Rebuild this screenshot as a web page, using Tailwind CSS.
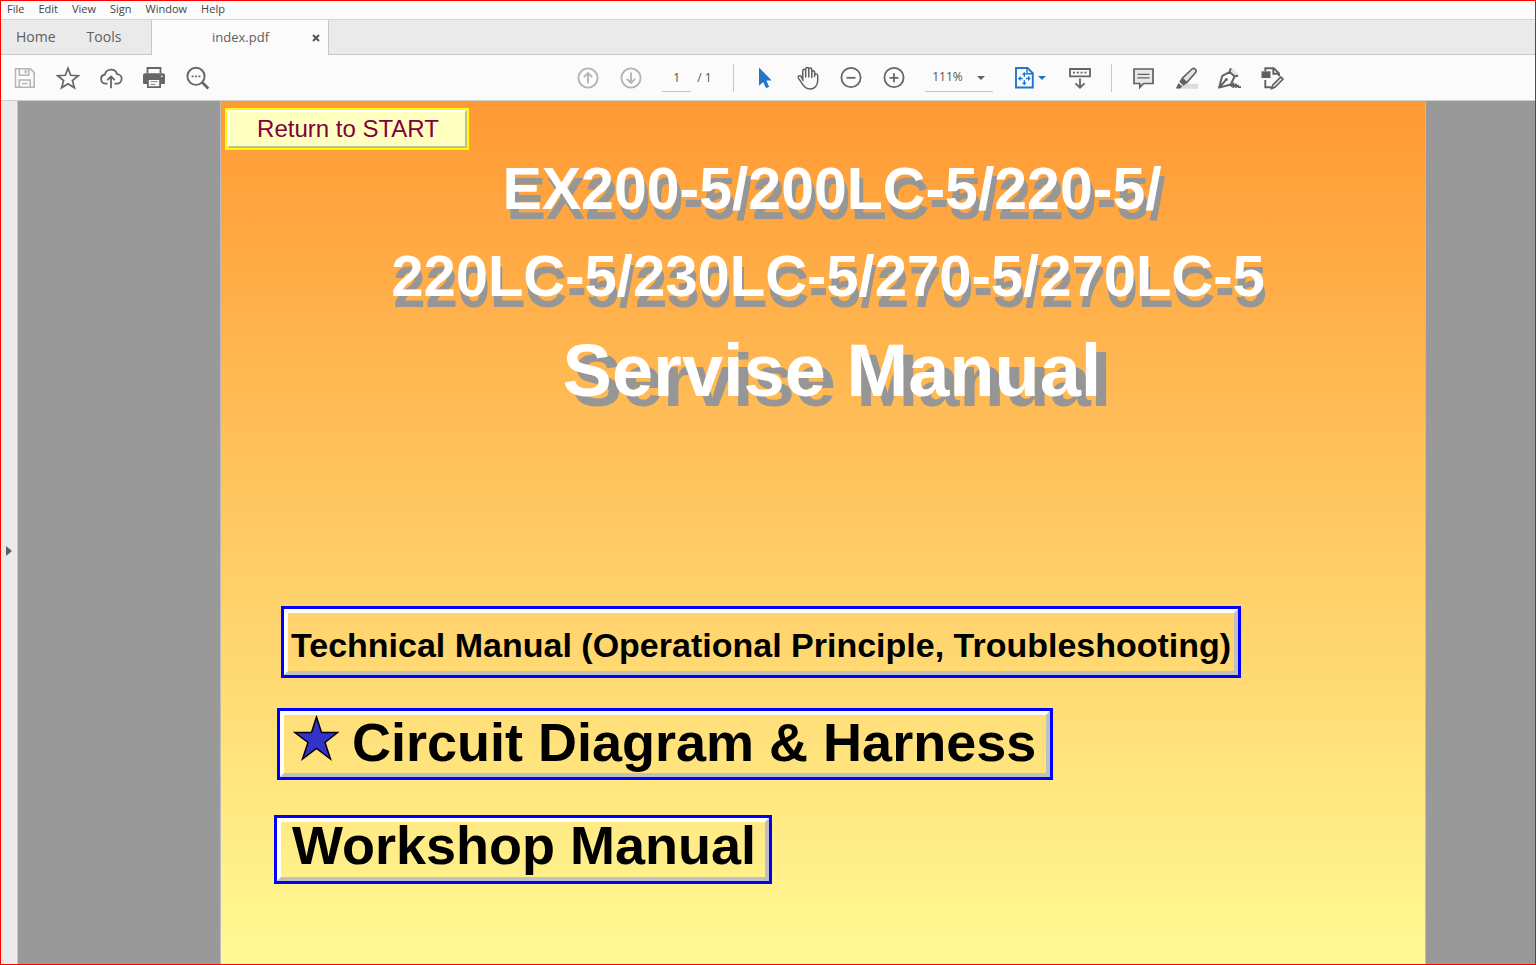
<!DOCTYPE html>
<html lang="en">
<head>
  <meta charset="UTF-8" />
  <meta name="viewport" content="width=device-width, initial-scale=1.0"/>
  <title>index.pdf</title>
  <script src="https://cdn.jsdelivr.net/npm/@tailwindcss/browser@4"></script>
</head>
<body class="h-screen flex flex-col overflow-hidden border border-[#ff0000] bg-[#fbfbfb] font-['Open_Sans','Noto_Sans',sans-serif] text-[#555]">

  <!-- Menu bar -->
  <nav class="h-[18px] shrink-0 flex items-center gap-3.5 pl-1.5 pb-0.5 text-[11px] leading-4 text-[#444]">
    <button>File</button>
    <button>Edit</button>
    <button>View</button>
    <button>Sign</button>
    <button>Window</button>
    <button>Help</button>
  </nav>

  <!-- Tabs -->
  <div class="h-9 shrink-0 flex border-t border-[#d5d5d5] bg-[#eaeaea] text-sm text-[#606060]">
    <div class="w-[151px] flex items-center gap-[31px] pl-[15px] border-r border-b border-[#c8c8c8]">
      <button>Home</button>
      <button>Tools</button>
    </div>
    <div class="w-[176px] flex items-center pl-[60px] pr-2 bg-[#fbfbfb] text-[13px]">
      <span class="flex-1">index.pdf</span>
      <button aria-label="Close tab">
        <svg class="w-2 h-2" viewBox="0 0 8 8" stroke="#555" stroke-width="2"><path d="M1 1l6 6M7 1L1 7"/></svg>
      </button>
    </div>
    <div class="flex-1 border-l border-b border-[#c8c8c8]"></div>
  </div>

  <!-- Toolbar -->
  <div class="h-[46px] shrink-0 flex items-center pl-3 pr-1.5 border-b border-[#cfcfcf]">
    <div class="flex items-center gap-[19px]">
      <button aria-label="Save">
        <svg class="w-6 h-6" viewBox="0 0 24 24" fill="none" stroke="#b5b5b5" stroke-width="1.6"><path d="M2.5 2.8h14.8l3.9 3.9v14.5H2.5z"/><path d="M6.3 3v6.2h9.4V3M6.3 21v-7h10.9v7M9 17.5h5.5"/><path d="M12.6 4v3.4" stroke-width="2"/></svg>
      </button>
      <button aria-label="Star">
        <svg class="w-6 h-6" viewBox="0 0 24 24" fill="none" stroke="#666" stroke-width="1.7"><path d="M12 2.2l2.7 7.1 7.6.4-5.9 4.8 2 7.3-6.4-4.1-6.4 4.1 2-7.3-5.9-4.8 7.6-.4z"/></svg>
      </button>
      <button aria-label="Upload">
        <svg class="w-6 h-6" viewBox="0 0 24 24" fill="none" stroke="#666" stroke-width="1.8"><path d="M8.500 17.600H6.200a4.600 4.600 0 0 1-.3-9.100 6.300 6.300 0 0 1 12.200-.3 4.700 4.700 0 0 1-.3 9.400h-2.300M12 22.300V11M8.200 14.200l3.800-3.800 3.800 3.800"/></svg>
      </button>
      <button aria-label="Print">
        <svg class="w-6 h-6" viewBox="0 0 24 24"><path d="M5.500 7V2h13v5" fill="#fbfbfb" stroke="#666" stroke-width="1.800"/><path d="M3 7.300h18a2 2 0 0 1 2 2V17a1 1 0 0 1-1 1H2a1 1 0 0 1-1-1V9.300a2 2 0 0 1 2-2z" fill="#666"/><path d="M5.900 13h12.200v8.200H5.900z" fill="#fbfbfb" stroke="#666" stroke-width="1.800"/><path d="M8.500 15.600h7M8.500 18.400h5" stroke="#888"/><circle cx="19.800" cy="10.300" r=".9" fill="#fbfbfb"/></svg>
      </button>
      <button aria-label="Search">
        <svg class="w-6 h-6" viewBox="0 0 24 24" fill="none" stroke="#666"><circle cx="11" cy="10.300" r="8.600" stroke-width="1.900"/><path d="M17.300 16.500l6 6" stroke-width="2.600"/><path d="M6.700 10.300h1.800M10.100 10.300h1.800M13.500 10.300h1.800" stroke-width="1.800"/></svg>
      </button>
    </div>

    <div class="grow-3"></div>

    <div class="flex items-center gap-[19px]">
      <button aria-label="Previous page">
        <svg class="w-6 h-6" viewBox="0 0 24 24" fill="none" stroke="#b5b5b5" stroke-width="1.900"><circle cx="12" cy="12" r="9.600"/><path d="M12 17.500V7.500M7.800 11.200L12 7l4.200 4.200"/></svg>
      </button>
      <button aria-label="Next page">
        <svg class="w-6 h-6" viewBox="0 0 24 24" fill="none" stroke="#b5b5b5" stroke-width="1.900"><circle cx="12" cy="12" r="9.600"/><path d="M12 6.500v10M7.800 12.800L12 17l4.200-4.200"/></svg>
      </button>
      <div class="flex items-center gap-1.5 text-xs">
        <input type="text" value="1" aria-label="Page number" class="w-[29px] h-7 border-b border-[#c4c4c4] bg-transparent text-center outline-none">
        <span class="w-[17px] whitespace-nowrap">/ 1</span>
      </div>
      <div class="w-px h-7 bg-[#c8c8c8]"></div>
      <button aria-label="Select tool">
        <svg class="w-6 h-6" viewBox="0 0 24 24" fill="#2374cc"><path d="M6 1.500v18.200l4.200-3.800 2.900 6.300 3-1.400-2.800-6.200h5.300z"/></svg>
      </button>
      <button aria-label="Hand tool">
        <svg class="w-6 h-6" viewBox="0 0 24 24" fill="none" stroke="#606060" stroke-width="1.500" stroke-linejoin="round" stroke-linecap="round"><path d="M6.800 14V4.800c0-2 2.900-2 2.900 0V11M9.700 11V2.900c0-2 3.100-2 3.100 0V11M12.800 11V3.600c0-2 3-2 3 0v7.900M15.800 11.500V6.200c.1-2 3-1.900 2.900.2l-.1 4V9c.4-1.700 3.200-1.500 3.100.6v5.200c0 4.900-3.200 8.200-7.600 8.200-3.600 0-5.500-1.500-7.200-4.300l-4.500-6.600c-1.100-1.900 1.200-3.200 2.700-1.700L7 14.500"/></svg>
      </button>
      <button aria-label="Zoom out">
        <svg class="w-6 h-6" viewBox="0 0 24 24" fill="none" stroke="#666" stroke-width="1.800"><circle cx="12" cy="11.500" r="9.600"/><path d="M7.500 11.800h9"/></svg>
      </button>
      <button aria-label="Zoom in">
        <svg class="w-6 h-6" viewBox="0 0 24 24" fill="none" stroke="#666" stroke-width="1.800"><circle cx="12" cy="11.500" r="9.600"/><path d="M7.500 11.800h9M12 7.300v9"/></svg>
      </button>
      <div class="grid items-center w-[68px]">
        <select aria-label="Zoom level" class="col-start-1 row-start-1 w-full h-7 pl-[7px] appearance-none border-b border-[#c4c4c4] bg-transparent text-xs">
          <option>111%</option>
        </select>
        <svg class="col-start-1 row-start-1 justify-self-end mr-2 w-2 h-1 pointer-events-none" viewBox="0 0 8 4" fill="#606060"><path d="M0 0h8L4 4z"/></svg>
      </div>
      <button aria-label="Fit page" class="w-[37px] flex items-center">
        <svg class="w-6 h-6" viewBox="0 0 24 24" fill="none" stroke="#2374cc" stroke-width="1.900"><path d="M4 2h11.500l5.300 5.200V21.500H4z"/><path d="M15 2v5.700h5.500" stroke-width="1.400"/><path d="M12.300 7v4M12.300 14v4.500M7 12.500h3.700M14 12.500h4" stroke-width="1.300"/><path d="M9.800 8.800L12.300 6l2.500 2.800zM9.800 16.500l2.500 2.800 2.500-2.800zM8.600 10L5.900 12.500 8.600 15zM16 10l2.700 2.500L16 15z" fill="#2374cc" stroke="none"/></svg>
        <svg class="ml-0.5 w-2 h-1" viewBox="0 0 8 4" fill="#2374cc"><path d="M0 0h8L4 4z"/></svg>
      </button>
      <button aria-label="Page display">
        <svg class="w-6 h-6" viewBox="0 0 24 24" fill="none" stroke="#666" stroke-width="1.800"><path d="M2 3h20v7.300H2z"/><path d="M5 6.600h14" stroke-dasharray="2 1.800"/><path d="M12 12.500v9M7.500 17.300l4.500 4.400 4.500-4.400"/></svg>
      </button>
      <div class="w-px h-7 bg-[#c8c8c8]"></div>
      <button aria-label="Comment">
        <svg class="w-6 h-6" viewBox="0 0 24 24" fill="#e8e8e8" stroke="#606060" stroke-width="1.700"><path d="M3 3h19v14.500H12.600L8.800 21.400V17.500H3z"/><path d="M6.500 8.300h12M6.500 11.800h12" stroke-width="1.200"/></svg>
      </button>
      <button aria-label="Highlight">
        <svg class="w-6 h-6" viewBox="0 0 24 24"><path d="M8 17.800h16v4.900H3.500z" fill="#dcdcdc"/><path d="M8.200 12.400L18 3c2-1.800 5.200.8 3.800 3.300l-9 10.200z" fill="#e4e4e4" stroke="#606060" stroke-width="1.600"/><path d="M7.600 12.200l5.300 4.900-3.300 2.700-4.300-4zM4.500 17l3.800 3.500-2.100 1.900H1.800z" fill="#606060"/></svg>
      </button>
      <button aria-label="Sign">
        <svg class="w-6 h-6" viewBox="0 0 24 24" fill="none" stroke="#606060" stroke-width="1.900" stroke-linejoin="round"><path d="M14.500 1.500l6 5.500-2.500 3-6.300-6z" fill="#e4e4e4" stroke="none"/><path d="M13.800 2.300l-1.200 3.600 5 4.600 3.500-1M12.500 6L5.300 9.800 2 21.700l11.800-3.200 3.700-8M2.200 21.500l6.600-7.300"/><circle cx="9.300" cy="13.500" r="1.500" fill="#606060" stroke="none"/><path d="M13.500 20.500l3-3-.3 3.600 2.800-2.700v2.700l2-1.500.7 1.500H24"/></svg>
      </button>
      <button aria-label="More tools">
        <svg class="w-6 h-6" viewBox="0 0 24 24" fill="none" stroke="#606060" stroke-width="1.900"><path d="M5.300 5V2.300h8.500l5.200 5v3M13.300 2.300v5.500H19M5.300 14v7.200h6"/><path d="M1.500 5.300h9V12h-9z" fill="#606060" stroke="none"/><path d="M12.700 19.100l8.100-8.100 2.200 2.200-8.100 8.100-3.400 1.300z" fill="#e4e4e4" stroke-width="1.600"/></svg>
      </button>
    </div>

    <div class="grow-2"></div>
  </div>

  <!-- Document area -->
  <div class="flex-1 min-h-0 flex">
    <aside class="w-[17px] shrink-0 flex items-center border-r border-[#c8c8c8] bg-[#ebebeb]">
      <button aria-label="Open navigation pane" class="ml-[5px] pt-9">
        <svg class="w-1.5 h-2.5" viewBox="0 0 6 10" fill="#606060"><path d="M0 0l6 5-6 5z"/></svg>
      </button>
    </aside>

    <main class="flex-1 overflow-hidden pl-[202px] pr-[109px] bg-[#999]">
      <article class="aspect-[4/3] border-x border-[#bbb] bg-linear-to-b/srgb from-[#ff9933] to-[#ffff99] pt-[7px] font-['Liberation_Sans',Arial,sans-serif]">
        <a href="#" class="ml-1 w-[244px] flex border-2 border-[#ffff00] bg-[#ffffc0] text-2xl leading-[34px] text-[#800040]">
          <span class="flex-1 border-2 border-t-white border-l-white border-r-[#c0c090] border-b-[#c0c090] pl-0.5 text-center">Return to START</span>
        </a>

        <h1 class="mt-[7px] pl-[18px] flex flex-col items-center gap-[23px] font-bold whitespace-nowrap text-white">
          <span class="text-[59px] leading-[64px] [text-shadow:4px_10px_0_#969696]">EX200-5/200LC-5/220-5/</span>
          <span class="pr-2 text-[58px] leading-[64px] [text-shadow:2px_11px_0_#969696]">220LC-5/230LC-5/270-5/270LC-5</span>
          <span class="text-[74px] leading-[80px] [text-shadow:10px_10px_0_#969696]">Servise Manual</span>
        </h1>

        <!-- Manual links -->
        <div class="mt-[195px] flex flex-col items-start pl-[53px] font-bold whitespace-nowrap text-black">
          <a href="#" class="ml-[7px] border-3 border-[#0000ff] text-[34px] leading-[52px]">
            <span class="block border-4 border-t-white border-l-white border-r-[#c0c0c0] border-b-[#c0c0c0] pt-1.5 px-[3px]">Technical Manual (Operational Principle, Troubleshooting)</span>
          </a>
          <a href="#" class="mt-[30px] ml-[3px] border-3 border-[#0000ff] text-[54px] leading-[54px]">
            <span class="flex gap-3 border-4 border-t-white border-l-white border-r-[#c0c0c0] border-b-[#c0c0c0] pb-1 pl-[9px] pr-2.5">
              <svg class="w-[47px] h-[47px]" viewBox="0 0 47 47" fill="#3333cc" stroke="#000" stroke-width="1.500"><path d="M23.500 2l5 15.500h16L32 27.500 37.500 44l-14-10.500L9.500 44 15 27.500 2 17.500h16.500z"/></svg>
              Circuit Diagram &amp; Harness
            </span>
          </a>
          <a href="#" class="mt-[35px] border-3 border-[#0000ff] text-[54px] leading-[46px]">
            <span class="block border-4 border-t-white border-l-white border-r-[#c0c0c0] border-b-[#c0c0c0] pb-[9px] pl-[11px] pr-[9px]">Workshop Manual</span>
          </a>
        </div>
      </article>
    </main>
  </div>

</body>
</html>
